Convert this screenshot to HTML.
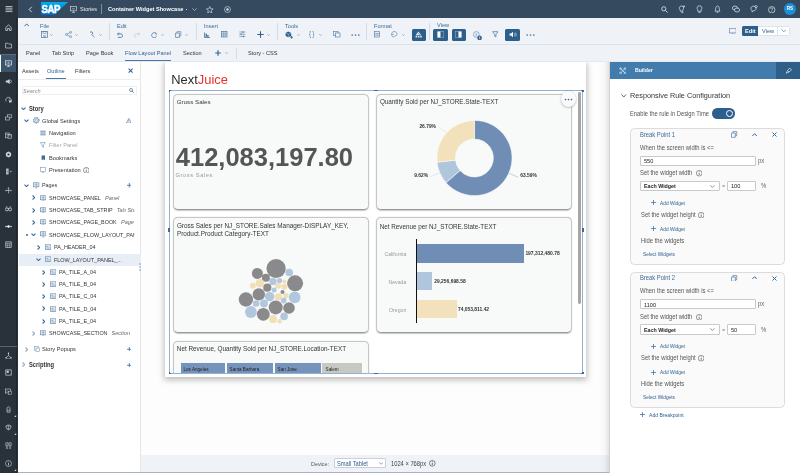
<!DOCTYPE html><html><head><meta charset="utf-8"><style>
html,body{margin:0;padding:0;width:800px;height:473px;overflow:hidden;background:#fff;font-family:"Liberation Sans",sans-serif;}
.r{position:absolute;box-sizing:border-box;}
.t{position:absolute;white-space:nowrap;-webkit-text-stroke-width:0.0px;}
#w{position:absolute;left:0;top:0;width:800px;height:473px;overflow:hidden;will-change:transform;}
</style></head><body><div id="w">
<div class="r" style="left:0px;top:0px;width:800px;height:18px;background:#354a5f;"></div>
<div class="r" style="left:0px;top:0px;width:17.5px;height:473px;background:#29313a;"></div>
<div class="r" style="left:17.5px;top:18px;width:782.5px;height:26.5px;background:#eff3f7;"></div>
<div class="r" style="left:17.5px;top:44px;width:782.5px;height:0.8px;background:#dde3ea;"></div>
<div class="r" style="left:17.5px;top:44.8px;width:782.5px;height:17px;background:#eff3f7;"></div>
<div class="r" style="left:17.5px;top:61px;width:782.5px;height:1px;background:#e2e9f0;"></div>
<div class="r" style="left:17.5px;top:62px;width:123.5px;height:411px;background:#ffffff;"></div>
<div class="r" style="left:140px;top:62px;width:0.8px;height:411px;background:#e6e6e6;"></div>
<div class="r" style="left:140.8px;top:62px;width:468px;height:393px;background:#fdfdfd;"></div>
<div class="r" style="left:140.8px;top:455px;width:468px;height:17px;background:#eff3f7;"></div>
<div class="r" style="left:17.5px;top:471.6px;width:782.5px;height:1.4px;background:#a9b4c0;"></div>
<div class="r" style="left:609px;top:62px;width:191px;height:411px;background:#ffffff;"></div>
<div class="r" style="left:598px;top:62px;width:11px;height:410px;background:linear-gradient(to right, rgba(0,0,0,0) 0%, rgba(0,0,0,0.025) 60%, rgba(0,0,0,0.1) 100%);"></div>
<div class="r" style="left:608.6px;top:62px;width:1px;height:411px;background:#d3d3d3;"></div>
<svg class="r" style="left:5px;top:5px;" width="8" height="8" viewBox="0 0 8 8"><path d="M0.5 1.5h7M0.5 3.2h7M0.5 4.9h7M0.5 6.6h7" stroke="#aab4be" stroke-width="1"/></svg>
<svg class="r" style="left:27.5px;top:6px;" width="5" height="7" viewBox="0 0 5 7"><path d="M3.8 0.8L1.2 3.5L3.8 6.2" fill="none" stroke="#dfe6ee" stroke-width="0.9"/></svg>
<svg class="r" style="left:40.5px;top:2.2px;" width="27" height="13" viewBox="0 0 27 13"><defs><linearGradient id="sg" x1="0" y1="0" x2="0" y2="1"><stop offset="0" stop-color="#00aeef"/><stop offset="1" stop-color="#0066c4"/></linearGradient></defs><path d="M0 0H27L13.5 13H0Z" fill="url(#sg)"/><text x="0.6" y="10.7" style="font-family:Liberation Sans;font-weight:bold;font-size:10.2px;letter-spacing:-0.55px" fill="#fff" stroke="#fff" stroke-width="0.45" transform="scale(0.95,1)">SAP</text></svg>
<svg class="r" style="left:70px;top:5.5px;" width="7" height="7" viewBox="0 0 7 7"><rect x="0.5" y="0.5" width="6" height="4.3" fill="none" stroke="#c9d3dd" stroke-width="0.7"/><path d="M3.5 4.8V6.6M2 6.6h3" stroke="#c9d3dd" stroke-width="0.7"/><path d="M2 2.8h3" stroke="#c9d3dd" stroke-width="0.6"/></svg>
<div class="t" style="left:80px;top:4.00px;font-size:6.050px;line-height:10px;color:#e6ecf2;transform:scaleX(0.9091);transform-origin:0 50%;">Stories</div>
<div class="r" style="left:101px;top:4px;width:0.7px;height:10px;background:#7d8d9c;"></div>
<div class="t" style="left:108.4px;top:4.00px;font-size:6.182px;line-height:10px;color:#ffffff;transform:scaleX(0.9091);transform-origin:0 50%;font-weight:bold;">Container Widget Showcase</div>
<div class="r" style="left:185.8px;top:8.6px;width:1.6px;height:1.6px;border-radius:50%;background:#fff;"></div>
<svg class="r" style="left:191.6px;top:7.6px;" width="5" height="3" viewBox="0 0 5 3"><path d="M0.4 0.4L2.5 2.5L4.6 0.4" fill="none" stroke="#c2ccd6" stroke-width="0.7"/></svg>
<svg class="r" style="left:206px;top:5.5px;" width="7.5" height="7.5" viewBox="0 0 7.5 7.5"><path d="M3.75 0.4L4.7 2.8L7.2 2.9L5.2 4.5L5.9 7L3.75 5.6L1.6 7L2.3 4.5L0.3 2.9L2.8 2.8Z" fill="none" stroke="#dfe6ee" stroke-width="0.6"/></svg>
<svg class="r" style="left:224.2px;top:5.6px;" width="7" height="7" viewBox="0 0 7 7"><circle cx="3.5" cy="3.5" r="3" fill="none" stroke="#dfe6ee" stroke-width="0.6"/><circle cx="3.5" cy="3.5" r="1.2" fill="#dfe6ee"/></svg>
<svg class="r" style="left:660.5px;top:6px;" width="7" height="7" viewBox="0 0 7 7"><circle cx="2.8" cy="2.8" r="2.1" fill="none" stroke="#e6ecf2" stroke-width="0.8"/><path d="M4.4 4.4L6.5 6.5" stroke="#e6ecf2" stroke-width="0.9"/></svg>
<svg class="r" style="left:677.5px;top:5px;" width="8" height="8.5" viewBox="0 0 8 8.5"><path d="M3.4 7.6h2M2 4.8C0.6 3.2 1.4 1 3.5 1C5.6 1 6.2 3.2 4.8 4.8V6.3H2.5Z" fill="none" stroke="#e6ecf2" stroke-width="0.7"/><path d="M6 0.3V2.5M4.9 1.4h2.2" stroke="#e6ecf2" stroke-width="0.6"/></svg>
<svg class="r" style="left:696px;top:5px;" width="7" height="8.5" viewBox="0 0 7 8.5"><path d="M2.5 7.6h2M1.8 4.8C0.4 3.2 1.2 0.8 3.5 0.8C5.8 0.8 6.6 3.2 5.2 4.8V6.3H1.8Z" fill="none" stroke="#e6ecf2" stroke-width="0.7"/></svg>
<svg class="r" style="left:714.2px;top:5px;" width="7" height="8.5" viewBox="0 0 7 8.5"><path d="M1 6.2C1.8 5.4 1.5 4 1.8 2.8C2.1 1.5 2.8 1 3.5 1C4.2 1 4.9 1.5 5.2 2.8C5.5 4 5.2 5.4 6 6.2Z" fill="none" stroke="#e6ecf2" stroke-width="0.7"/><path d="M2.7 7.4h1.6" stroke="#e6ecf2" stroke-width="0.7"/></svg>
<svg class="r" style="left:731.6px;top:5px;" width="8" height="8" viewBox="0 0 8 8"><ellipse cx="3" cy="3" rx="2.6" ry="2" fill="none" stroke="#e6ecf2" stroke-width="0.7"/><ellipse cx="5" cy="5" rx="2.6" ry="2" fill="#354a5f" stroke="#e6ecf2" stroke-width="0.7"/></svg>
<svg class="r" style="left:749.6px;top:5px;" width="8" height="8" viewBox="0 0 8 8"><path d="M1 3.5C1 2 2 1.2 3.5 1.2C5 1.2 6 2 6 3.5C6 5 5 5.8 3.5 5.8L2 7V5.4C1.3 5 1 4.3 1 3.5Z" fill="none" stroke="#e6ecf2" stroke-width="0.7"/><circle cx="6.2" cy="1.6" r="1.1" fill="none" stroke="#e6ecf2" stroke-width="0.6"/></svg>
<svg class="r" style="left:768px;top:5.5px;" width="7.5" height="7.5" viewBox="0 0 7.5 7.5"><circle cx="3.75" cy="3.75" r="3.2" fill="none" stroke="#e6ecf2" stroke-width="0.7"/><path d="M2.7 2.9C2.7 2.2 3.2 1.9 3.75 1.9C4.4 1.9 4.8 2.3 4.8 2.8C4.8 3.6 3.75 3.6 3.75 4.6" fill="none" stroke="#e6ecf2" stroke-width="0.6"/><circle cx="3.75" cy="5.6" r="0.4" fill="#e6ecf2"/></svg>
<div class="r" style="left:783.6px;top:2.6px;width:12.8px;height:12.8px;border-radius:50%;background:#1d8fd6;color:#fff;font-size:4.6px;font-weight:bold;line-height:12.8px;text-align:center;">RS</div>
<div class="r" style="left:16.2px;top:18px;width:1px;height:455px;background:#20272f;"></div>
<div class="r" style="left:0px;top:54.6px;width:16.2px;height:17.9px;background:#3b536b;"></div>
<div class="r" style="left:0px;top:54.4px;width:16.2px;height:0.5px;background:#5b6b7b;"></div>
<div class="r" style="left:0px;top:54.9px;width:1.3px;height:17.6px;background:#f4f8fb;"></div>
<svg class="r" style="left:5.1px;top:23.5px;" width="7" height="7" viewBox="0 0 7 7"><path d="M0.8 3.4L3.5 0.9L6.2 3.4V6.4H4.4V4.4H2.6V6.4H0.8Z" fill="none" stroke="#ccd4dc" stroke-width="0.8"/></svg>
<svg class="r" style="left:5.1px;top:41.5px;" width="7" height="7" viewBox="0 0 7 7"><path d="M0.6 1.2H2.8L3.5 2H6.4V6H0.6Z" fill="none" stroke="#ccd4dc" stroke-width="0.7"/></svg>
<svg class="r" style="left:5.1px;top:60.2px;" width="7" height="7" viewBox="0 0 7 7"><rect x="0.6" y="0.8" width="5.8" height="4.2" fill="none" stroke="#e6ecf2" stroke-width="0.7"/><path d="M3.5 5V6.5M2 6.5h3M2.2 2.2V3.8M3.5 1.8V3.8M4.8 2.6V3.8" stroke="#e6ecf2" stroke-width="0.6"/></svg>
<svg class="r" style="left:5.1px;top:78.0px;" width="7" height="7" viewBox="0 0 7 7"><path d="M0.8 2.6H2.4L4.6 0.9V6.1L2.4 4.4H0.8Z" fill="#ccd4dc"/><circle cx="5.6" cy="3.5" r="1.1" fill="none" stroke="#ccd4dc" stroke-width="0.6"/></svg>
<svg class="r" style="left:5.1px;top:95.8px;" width="7" height="7" viewBox="0 0 7 7"><path d="M1 5.4A2.8 2.8 0 1 1 6 5.4" fill="none" stroke="#ccd4dc" stroke-width="0.7"/><path d="M3.5 3.8L5 2.4" stroke="#ccd4dc" stroke-width="0.6"/><rect x="4" y="4.4" width="2.6" height="2" fill="#ccd4dc"/></svg>
<svg class="r" style="left:5.1px;top:113.8px;" width="7" height="7" viewBox="0 0 7 7"><rect x="2.4" y="0.8" width="4" height="3" fill="none" stroke="#ccd4dc" stroke-width="0.6"/><rect x="0.6" y="3" width="4" height="3" fill="#29313a" stroke="#ccd4dc" stroke-width="0.6"/></svg>
<svg class="r" style="left:5.1px;top:132.3px;" width="7" height="7" viewBox="0 0 7 7"><rect x="0.6" y="1" width="3.6" height="4.8" fill="none" stroke="#ccd4dc" stroke-width="0.6"/><rect x="3" y="2.4" width="3.4" height="3.8" fill="#29313a" stroke="#ccd4dc" stroke-width="0.6"/><path d="M0.6 2.6h3.6M3 3.8h3.4" stroke="#ccd4dc" stroke-width="0.5"/></svg>
<svg class="r" style="left:5.1px;top:150.5px;" width="7" height="7" viewBox="0 0 7 7"><path d="M3.5 0.6L6.1 2V5L3.5 6.4L0.9 5V2Z" fill="#ccd4dc"/><circle cx="3.5" cy="3.5" r="1.1" fill="#29313a"/></svg>
<svg class="r" style="left:5.1px;top:168.4px;" width="7" height="7" viewBox="0 0 7 7"><rect x="1" y="0.6" width="2.6" height="5.8" fill="#ccd4dc"/><path d="M1 2h2.6M1 3.5h2.6M1 5h2.6" stroke="#29313a" stroke-width="0.4"/><path d="M4.6 3.5H6.4M5.6 2.8L6.4 3.5L5.6 4.2" fill="none" stroke="#ccd4dc" stroke-width="0.5"/></svg>
<svg class="r" style="left:5.1px;top:186.7px;" width="7" height="7" viewBox="0 0 7 7"><path d="M3.5 0.6V6.4M0.6 3.5H6.4M2.7 1.4L3.5 0.6L4.3 1.4M1.4 2.7L0.6 3.5L1.4 4.3M5.6 2.7L6.4 3.5L5.6 4.3" fill="none" stroke="#ccd4dc" stroke-width="0.6"/></svg>
<svg class="r" style="left:5.1px;top:205.3px;" width="7" height="7" viewBox="0 0 7 7"><circle cx="1.9" cy="4.4" r="1.5" fill="none" stroke="#ccd4dc" stroke-width="0.8"/><circle cx="5.1" cy="4.4" r="1.5" fill="none" stroke="#ccd4dc" stroke-width="0.8"/><path d="M1.2 2.6L2 1.2M5.8 2.6L5 1.2M3 3.4h1" stroke="#ccd4dc" stroke-width="0.7"/></svg>
<svg class="r" style="left:5.1px;top:222.6px;" width="7" height="7" viewBox="0 0 7 7"><path d="M0.2 3.5H6.8" stroke="#ccd4dc" stroke-width="0.5"/><circle cx="1" cy="3.5" r="0.8" fill="#ccd4dc"/><circle cx="3.5" cy="3.5" r="1.2" fill="#fff"/><circle cx="6" cy="3.5" r="0.8" fill="#ccd4dc"/></svg>
<svg class="r" style="left:5.1px;top:240.9px;" width="7" height="7" viewBox="0 0 7 7"><rect x="0.8" y="0.9" width="5.4" height="5.4" fill="none" stroke="#ccd4dc" stroke-width="0.7"/><path d="M0.8 2.4h5.4M2.6 2.4v3.9M4.4 2.4v3.9M0.8 4.2h5.4" stroke="#ccd4dc" stroke-width="0.45"/></svg>
<div class="r" style="left:0px;top:345.6px;width:17px;height:0.7px;background:#59636e;"></div>
<svg class="r" style="left:5.1px;top:352.1px;" width="7" height="7" viewBox="0 0 7 7"><path d="M3.5 0.8V3.6M3.5 3.6L1 5.6M3.5 3.6L6 5.6" fill="none" stroke="#ccd4dc" stroke-width="0.6"/><circle cx="3.5" cy="1.2" r="0.7" fill="#ccd4dc"/><circle cx="1" cy="5.8" r="0.7" fill="#ccd4dc"/><circle cx="6" cy="5.8" r="0.7" fill="#ccd4dc"/><path d="M0.4 6.6H6.6" stroke="#ccd4dc" stroke-width="0.4"/></svg>
<svg class="r" style="left:5.1px;top:369.4px;" width="7" height="7" viewBox="0 0 7 7"><rect x="0.8" y="0.9" width="5.4" height="5.2" fill="none" stroke="#ccd4dc" stroke-width="0.7"/><rect x="1.6" y="1.8" width="2.2" height="2" fill="#ccd4dc"/></svg>
<svg class="r" style="left:5.1px;top:387.7px;" width="7" height="7" viewBox="0 0 7 7"><rect x="0.6" y="1" width="5" height="4" fill="none" stroke="#ccd4dc" stroke-width="0.6"/><path d="M1.2 4.2L2.6 2.8L3.6 3.8" fill="none" stroke="#ccd4dc" stroke-width="0.5"/><rect x="3.6" y="3.2" width="3" height="3" fill="#29313a" stroke="#ccd4dc" stroke-width="0.5"/></svg>
<svg class="r" style="left:5.1px;top:405.6px;" width="7" height="7" viewBox="0 0 7 7"><path d="M2 6.2V2.6C2 1.6 2.7 0.8 3.5 0.8C4.3 0.8 5 1.6 5 2.6V6.2Z" fill="none" stroke="#ccd4dc" stroke-width="0.7"/><path d="M2 4.2h3" stroke="#ccd4dc" stroke-width="0.5"/></svg>
<svg class="r" style="left:5.1px;top:424.2px;" width="7" height="7" viewBox="0 0 7 7"><path d="M0.8 2.2C1.8 0.6 5.2 0.6 6.2 2.2L5.4 4.6C4.6 6.2 2.4 6.2 1.6 4.6Z" fill="none" stroke="#ccd4dc" stroke-width="0.6"/><path d="M0.8 2.2h5.4M1.6 4.6h3.8M3.5 1v5" stroke="#ccd4dc" stroke-width="0.45"/></svg>
<svg class="r" style="left:5.1px;top:442.0px;" width="7" height="7" viewBox="0 0 7 7"><path d="M0.8 0.8H3V3.8H0.8ZM4 0.8H6.2V3.8H4ZM1.9 3.8V6.2M5.1 3.8V6.2M0.8 6.2h2.2M4 6.2h2.2" fill="none" stroke="#ccd4dc" stroke-width="0.6"/></svg>
<svg class="r" style="left:5.1px;top:459.8px;" width="7" height="7" viewBox="0 0 7 7"><circle cx="3.5" cy="3.5" r="3" fill="none" stroke="#ccd4dc" stroke-width="0.6"/><path d="M3.5 3V5.4" stroke="#ccd4dc" stroke-width="0.8"/><circle cx="3.5" cy="1.9" r="0.45" fill="#ccd4dc"/></svg>
<svg class="r" style="left:14.4px;top:414.8px;" width="2.2" height="2.2" viewBox="0 0 2.2 2.2"><path d="M2.2 0V2.2H0Z" fill="#c3ccd5"/></svg>
<svg class="r" style="left:14.4px;top:433.3px;" width="2.2" height="2.2" viewBox="0 0 2.2 2.2"><path d="M2.2 0V2.2H0Z" fill="#c3ccd5"/></svg>
<svg class="r" style="left:14.4px;top:468.8px;" width="2.2" height="2.2" viewBox="0 0 2.2 2.2"><path d="M2.2 0V2.2H0Z" fill="#c3ccd5"/></svg>
<svg class="r" style="left:23.6px;top:22.8px;" width="5.4" height="3.8" viewBox="0 0 5.4 3.8"><path d="M0.5 3.2L2.7 0.9L4.9 3.2" fill="none" stroke="#3f6d99" stroke-width="1"/></svg>
<div class="t" style="left:40.2px;top:20.60px;font-size:6.160px;line-height:10px;color:#3b6a97;transform:scaleX(0.9091);transform-origin:0 50%;">File</div>
<div class="t" style="left:116.7px;top:20.60px;font-size:6.160px;line-height:10px;color:#3b6a97;transform:scaleX(0.9091);transform-origin:0 50%;">Edit</div>
<div class="t" style="left:203.7px;top:20.60px;font-size:6.160px;line-height:10px;color:#3b6a97;transform:scaleX(0.9091);transform-origin:0 50%;">Insert</div>
<div class="t" style="left:285.2px;top:20.60px;font-size:6.160px;line-height:10px;color:#3b6a97;transform:scaleX(0.9091);transform-origin:0 50%;">Tools</div>
<div class="t" style="left:373.8px;top:20.60px;font-size:6.160px;line-height:10px;color:#3b6a97;transform:scaleX(0.9091);transform-origin:0 50%;">Format</div>
<div class="t" style="left:437px;top:20.40px;font-size:6.160px;line-height:10px;color:#3b6a97;transform:scaleX(0.9091);transform-origin:0 50%;">View</div>
<div class="r" style="left:109.1px;top:22.6px;width:0.7px;height:17px;background:#d4dce5;"></div>
<div class="r" style="left:196.1px;top:22.6px;width:0.7px;height:17px;background:#d4dce5;"></div>
<div class="r" style="left:277.1px;top:22.6px;width:0.7px;height:17px;background:#d4dce5;"></div>
<div class="r" style="left:366.1px;top:22.6px;width:0.7px;height:17px;background:#d4dce5;"></div>
<div class="r" style="left:429.1px;top:22.6px;width:0.7px;height:17px;background:#d4dce5;"></div>
<svg class="r" style="left:40.6px;top:31.2px;" width="7" height="7" viewBox="0 0 7 7"><rect x="0.6" y="0.6" width="5.8" height="5.8" fill="none" stroke="#4a77a3" stroke-width="0.7"/><rect x="2" y="0.6" width="3" height="2" fill="none" stroke="#4a77a3" stroke-width="0.5"/><path d="M2 4.2L5 6.2M5 4.2L2 6.2" stroke="#4a77a3" stroke-width="0.5"/></svg>
<svg class="r" style="left:50.0px;top:33.6px;" width="3.2" height="2" viewBox="0 0 3.2 2"><path d="M0.2 0.2L1.6 1.6L3 0.2" fill="none" stroke="#6a8bad" stroke-width="0.55"/></svg>
<svg class="r" style="left:64.8px;top:31.2px;" width="7" height="7" viewBox="0 0 7 7"><circle cx="1.4" cy="3.5" r="1" fill="none" stroke="#4a77a3" stroke-width="0.6"/><circle cx="5.6" cy="1.3" r="1" fill="none" stroke="#4a77a3" stroke-width="0.6"/><circle cx="5.6" cy="5.7" r="1" fill="none" stroke="#4a77a3" stroke-width="0.6"/><path d="M2.3 3L4.7 1.7M2.3 4L4.7 5.3" stroke="#4a77a3" stroke-width="0.6"/></svg>
<svg class="r" style="left:75.10000000000001px;top:33.6px;" width="3.2" height="2" viewBox="0 0 3.2 2"><path d="M0.2 0.2L1.6 1.6L3 0.2" fill="none" stroke="#6a8bad" stroke-width="0.55"/></svg>
<svg class="r" style="left:88.6px;top:31.4px;" width="6" height="6.5" viewBox="0 0 6 6.5"><path d="M1 1.2L3 0.8L4 2.2L2.6 3.4L5.4 6" fill="none" stroke="#4a77a3" stroke-width="0.8"/></svg>
<svg class="r" style="left:98.80000000000001px;top:33.6px;" width="3.2" height="2" viewBox="0 0 3.2 2"><path d="M0.2 0.2L1.6 1.6L3 0.2" fill="none" stroke="#6a8bad" stroke-width="0.55"/></svg>
<svg class="r" style="left:116.8px;top:31.6px;" width="6" height="6" viewBox="0 0 6 6"><path d="M1.8 0.6L0.5 1.9L1.8 3.2M0.5 1.9H3.8C5 1.9 5.6 2.8 5.6 3.7C5.6 4.7 5 5.4 3.8 5.4H0.8" fill="none" stroke="#2f6192" stroke-width="0.75"/></svg>
<svg class="r" style="left:134.4px;top:31.6px;" width="6" height="6" viewBox="0 0 6 6"><path d="M4.2 0.6L5.5 1.9L4.2 3.2M5.5 1.9H2.2C1 1.9 0.4 2.8 0.4 3.7C0.4 4.7 1 5.4 2.2 5.4" fill="none" stroke="#b9c8d8" stroke-width="0.75"/></svg>
<svg class="r" style="left:151.4px;top:31.6px;" width="6.5" height="6.5" viewBox="0 0 6.5 6.5"><path d="M5.3 1.6A2.6 2.6 0 1 0 5.6 4.4" fill="none" stroke="#4a77a3" stroke-width="0.75"/><path d="M3.8 0.6L5.6 1.8L4.6 3.4" fill="none" stroke="#4a77a3" stroke-width="0.6"/></svg>
<svg class="r" style="left:160.9px;top:33.6px;" width="3.2" height="2" viewBox="0 0 3.2 2"><path d="M0.2 0.2L1.6 1.6L3 0.2" fill="none" stroke="#6a8bad" stroke-width="0.55"/></svg>
<svg class="r" style="left:175.2px;top:31.2px;" width="6.5" height="7" viewBox="0 0 6.5 7"><path d="M2 2V0.6H5.8V5H4.4" fill="none" stroke="#4a77a3" stroke-width="0.6"/><path d="M0.6 2H4.4V6.4H0.6Z" fill="none" stroke="#4a77a3" stroke-width="0.7"/></svg>
<svg class="r" style="left:185.20000000000002px;top:33.6px;" width="3.2" height="2" viewBox="0 0 3.2 2"><path d="M0.2 0.2L1.6 1.6L3 0.2" fill="none" stroke="#6a8bad" stroke-width="0.55"/></svg>
<svg class="r" style="left:203.8px;top:31.6px;" width="6.5" height="6" viewBox="0 0 6.5 6"><path d="M0.5 0.5V5.5H6.2" fill="none" stroke="#2f6192" stroke-width="0.7"/><rect x="1.6" y="1.6" width="1.2" height="3.3" fill="#2f6192"/><rect x="3.3" y="3" width="1.2" height="1.9" fill="#2f6192"/></svg>
<svg class="r" style="left:221.2px;top:31.4px;" width="6.5" height="6.5" viewBox="0 0 6.5 6.5"><rect x="0.5" y="0.5" width="5.5" height="5.5" fill="none" stroke="#4a77a3" stroke-width="0.7"/><path d="M0.5 2.3h5.5M0.5 4.1h5.5M2.3 0.5v5.5M4.1 0.5v5.5" stroke="#4a77a3" stroke-width="0.5"/></svg>
<svg class="r" style="left:239.2px;top:31.4px;" width="6.5" height="6.5" viewBox="0 0 6.5 6.5"><path d="M0.3 1h6M0.3 3.2h6M0.3 5.4h6" stroke="#4a77a3" stroke-width="0.6"/><rect x="3.4" y="0.3" width="1" height="1.5" fill="#4a77a3"/><rect x="1.6" y="2.5" width="1" height="1.5" fill="#4a77a3"/><rect x="3.9" y="4.7" width="1" height="1.5" fill="#4a77a3"/></svg>
<svg class="r" style="left:256.6px;top:31.2px;" width="7" height="7" viewBox="0 0 7 7"><path d="M3.5 0.3V6.7M0.3 3.5H6.7" stroke="#2f6192" stroke-width="1.1"/></svg>
<svg class="r" style="left:266.59999999999997px;top:33.6px;" width="3.2" height="2" viewBox="0 0 3.2 2"><path d="M0.2 0.2L1.6 1.6L3 0.2" fill="none" stroke="#6a8bad" stroke-width="0.55"/></svg>
<svg class="r" style="left:284.6px;top:31px;" width="8.5" height="8" viewBox="0 0 8.5 8"><path d="M0.6 1.9L3.4 0.5L6.2 1.9V4.9L3.4 6.3L0.6 4.9Z" fill="#2f6192"/><path d="M0.6 1.9L3.4 3.3L6.2 1.9M3.4 3.3V6.3" fill="none" stroke="#c9d7e6" stroke-width="0.45"/><path d="M6.6 4.8V7.8M5.1 6.3h3" stroke="#2f6192" stroke-width="0.8"/></svg>
<svg class="r" style="left:296.59999999999997px;top:33.6px;" width="3.2" height="2" viewBox="0 0 3.2 2"><path d="M0.2 0.2L1.6 1.6L3 0.2" fill="none" stroke="#6a8bad" stroke-width="0.55"/></svg>
<div class="t" style="left:308.8px;top:29.40px;font-size:6.820px;line-height:10px;color:#5a83ab;transform:scaleX(0.9091);transform-origin:0 50%;">{&#8201;}</div>
<svg class="r" style="left:319.4px;top:33.6px;" width="3.2" height="2" viewBox="0 0 3.2 2"><path d="M0.2 0.2L1.6 1.6L3 0.2" fill="none" stroke="#6a8bad" stroke-width="0.55"/></svg>
<svg class="r" style="left:333.3px;top:31.4px;" width="7.5" height="6.5" viewBox="0 0 7.5 6.5"><rect x="0.5" y="0.5" width="4.5" height="4" fill="none" stroke="#4a77a3" stroke-width="0.6"/><rect x="2.5" y="2" width="4.5" height="4" fill="#eff3f7" stroke="#4a77a3" stroke-width="0.6"/></svg>
<svg class="r" style="left:351px;top:34px;" width="9" height="2" viewBox="0 0 9 2"><circle cx="1.2" cy="1" r="0.85" fill="#4a77a3"/><circle cx="4.5" cy="1" r="0.85" fill="#4a77a3"/><circle cx="7.8" cy="1" r="0.85" fill="#4a77a3"/></svg>
<svg class="r" style="left:373.8px;top:31.3px;" width="6" height="6.5" viewBox="0 0 6 6.5"><rect x="0.5" y="0.5" width="5" height="5.5" fill="none" stroke="#4a77a3" stroke-width="0.6"/><path d="M0.5 2.4h5M0.5 4.2h5M3 2.4v1.8" stroke="#4a77a3" stroke-width="0.5"/></svg>
<svg class="r" style="left:391px;top:31.3px;" width="7" height="6.5" viewBox="0 0 7 6.5"><path d="M6 3.2C6 1.6 4.8 0.5 3.3 0.5C1.7 0.5 0.5 1.8 0.5 3.3C0.5 4.9 1.7 6 3 6C3.8 6 3.6 5 4.3 4.8C5.2 4.6 6 4.6 6 3.2Z" fill="none" stroke="#4a77a3" stroke-width="0.6"/><circle cx="2" cy="3.3" r="0.6" fill="#4a77a3"/></svg>
<svg class="r" style="left:401.59999999999997px;top:33.6px;" width="3.2" height="2" viewBox="0 0 3.2 2"><path d="M0.2 0.2L1.6 1.6L3 0.2" fill="none" stroke="#6a8bad" stroke-width="0.55"/></svg>
<div class="r" style="left:411.7px;top:29.1px;width:14.7px;height:11.6px;background:#2d5f8c;border-radius:1.5px;"></div>
<svg class="r" style="left:415.3px;top:31.4px;" width="7.4" height="7.2" viewBox="0 0 7.4 7.2"><path d="M3.4 0.6L6.4 4.2H0.6Z" fill="#e4ecf4"/><path d="M2.6 1.8L5 4.2" stroke="#2d5f8c" stroke-width="0.55"/><rect x="0.6" y="4.9" width="1.6" height="1.6" fill="#e4ecf4"/><rect x="2.9" y="4.9" width="1.6" height="1.6" fill="#e4ecf4"/><rect x="5.2" y="4.9" width="1.6" height="1.6" fill="#e4ecf4"/></svg>
<div class="r" style="left:433.2px;top:29.2px;width:14.6px;height:11.5px;background:#2d5f8c;border-radius:1.5px;"></div>
<div class="r" style="left:451.5px;top:29.2px;width:14.5px;height:11.5px;background:#2d5f8c;border-radius:1.5px;"></div>
<svg class="r" style="left:437px;top:31.4px;" width="7.4" height="7" viewBox="0 0 7.4 7"><rect x="0.4" y="0.4" width="3" height="6.2" fill="#fff"/><rect x="3.4" y="0.4" width="3.4" height="6.2" fill="none" stroke="#9fb6cc" stroke-width="0.5"/></svg>
<svg class="r" style="left:455.2px;top:31.4px;" width="7.4" height="7" viewBox="0 0 7.4 7"><rect x="0.4" y="0.4" width="3.4" height="6.2" fill="none" stroke="#9fb6cc" stroke-width="0.5"/><rect x="3.6" y="0.4" width="3" height="6.2" fill="#fff"/></svg>
<svg class="r" style="left:472.6px;top:30.8px;" width="9.4" height="9.6" viewBox="0 0 9.4 9.6"><circle cx="3.3" cy="3.5" r="2.9" fill="none" stroke="#5f86ad" stroke-width="0.65"/><path d="M3.3 2.4V4.9" stroke="#5f86ad" stroke-width="0.8"/><circle cx="6.6" cy="6.9" r="2.3" fill="#2f6192"/><path d="M6 5.9H7.1L6.4 6.7C7.4 6.7 7.3 8 6 7.9" fill="none" stroke="#fff" stroke-width="0.5"/></svg>
<svg class="r" style="left:491.6px;top:31.3px;" width="6.6" height="6.6" viewBox="0 0 6.6 6.6"><path d="M0.5 0.7H6.1L3.9 3.4V6L2.7 5.2V3.4Z" fill="none" stroke="#4a77a3" stroke-width="0.75"/></svg>
<div class="r" style="left:505px;top:29.2px;width:14.7px;height:11.5px;background:#2d5f8c;border-radius:1.5px;"></div>
<svg class="r" style="left:508.7px;top:31.2px;" width="8" height="7" viewBox="0 0 8 7"><path d="M0.6 2.4H2L4 0.8V6.2L2 4.6H0.6Z" fill="#fff"/><path d="M5.2 2.2C6 2.8 6 4.2 5.2 4.8M6.2 1.4C7.4 2.4 7.4 4.6 6.2 5.6" fill="none" stroke="#fff" stroke-width="0.55"/></svg>
<svg class="r" style="left:526px;top:34px;" width="9" height="2" viewBox="0 0 9 2"><circle cx="1.2" cy="1" r="0.85" fill="#4a77a3"/><circle cx="4.5" cy="1" r="0.85" fill="#4a77a3"/><circle cx="7.8" cy="1" r="0.85" fill="#4a77a3"/></svg>
<svg class="r" style="left:728.8px;top:27.6px;" width="7.6" height="6.4" viewBox="0 0 7.6 6.4"><rect x="0.5" y="0.5" width="6.6" height="4.4" fill="none" stroke="#6b90b5" stroke-width="0.7"/><path d="M2 5.9h3.6" stroke="#6b90b5" stroke-width="0.7"/></svg>
<div class="r" style="left:742px;top:25.5px;width:47.5px;height:10.4px;background:#fff;border:0.6px solid #dfe4ea;border-radius:1.5px;"></div>
<div class="r" style="left:742px;top:25.5px;width:16.3px;height:10.4px;background:#2d5f8c;border-radius:1.5px 0 0 1.5px;"></div>
<div class="r" style="left:777.4px;top:25.8px;width:0.6px;height:9.8px;background:#dfe4ea;"></div>
<div class="t" style="left:744.8px;top:25.60px;font-size:6.160px;line-height:10px;color:#ffffff;transform:scaleX(0.9091);transform-origin:0 50%;font-weight:bold;">Edit</div>
<div class="t" style="left:761.5px;top:25.70px;font-size:6.160px;line-height:10px;color:#2f6192;transform:scaleX(0.9091);transform-origin:0 50%;">View</div>
<svg class="r" style="left:780.8px;top:29.3px;" width="5.6" height="3.4" viewBox="0 0 5.6 3.4"><path d="M0.4 0.4L2.8 2.9L5.2 0.4" fill="none" stroke="#5a83ab" stroke-width="0.75"/></svg>
<div class="t" style="left:26px;top:48.00px;font-size:6.160px;line-height:10px;color:#32363a;transform:scaleX(0.9091);transform-origin:0 50%;">Panel</div>
<div class="t" style="left:52.2px;top:48.00px;font-size:6.160px;line-height:10px;color:#32363a;transform:scaleX(0.9091);transform-origin:0 50%;">Tab Strip</div>
<div class="t" style="left:85.7px;top:48.00px;font-size:6.160px;line-height:10px;color:#32363a;transform:scaleX(0.9091);transform-origin:0 50%;">Page Book</div>
<div class="t" style="left:124.7px;top:48.00px;font-size:6.160px;line-height:10px;color:#2f6192;transform:scaleX(0.9091);transform-origin:0 50%;">Flow Layout Panel</div>
<div class="r" style="left:124.5px;top:60px;width:46.8px;height:1.2px;background:#4a78a6;"></div>
<div class="t" style="left:182.7px;top:48.00px;font-size:6.160px;line-height:10px;color:#32363a;transform:scaleX(0.9091);transform-origin:0 50%;">Section</div>
<svg class="r" style="left:214.7px;top:50px;" width="6" height="6" viewBox="0 0 6 6"><path d="M3 0.2V5.8M0.2 3H5.8" stroke="#2f6192" stroke-width="1.1"/></svg>
<svg class="r" style="left:224.6px;top:52.3px;" width="3.2" height="2" viewBox="0 0 3.2 2"><path d="M0.2 0.2L1.6 1.6L3 0.2" fill="none" stroke="#6a8bad" stroke-width="0.55"/></svg>
<div class="r" style="left:236px;top:47.5px;width:0.7px;height:11.5px;background:#d4dce5;"></div>
<div class="t" style="left:248.4px;top:48.00px;font-size:6.160px;line-height:10px;color:#32363a;transform:scaleX(0.9091);transform-origin:0 50%;">Story - CSS</div>
<div class="t" style="left:21.9px;top:66.00px;font-size:6.160px;line-height:10px;color:#32363a;transform:scaleX(0.9091);transform-origin:0 50%;">Assets</div>
<div class="t" style="left:46.6px;top:66.00px;font-size:6.160px;line-height:10px;color:#2f6192;transform:scaleX(0.9091);transform-origin:0 50%;">Outline</div>
<div class="t" style="left:74.7px;top:66.00px;font-size:6.160px;line-height:10px;color:#32363a;transform:scaleX(0.9091);transform-origin:0 50%;">Filters</div>
<div class="r" style="left:17.5px;top:79.3px;width:123px;height:0.6px;background:#eeeeee;"></div>
<div class="r" style="left:46.4px;top:77.8px;width:19.9px;height:1.1px;background:#4a78a6;"></div>
<svg class="r" style="left:128.2px;top:67.6px;" width="5.2" height="5.2" viewBox="0 0 5.2 5.2"><path d="M0.6 0.6L4.6 4.6M4.6 0.6L0.6 4.6" stroke="#2f6192" stroke-width="1.05"/></svg>
<div class="r" style="left:21.5px;top:85.7px;width:115.5px;height:9.8px;border:0.6px solid #eef0f2;background:#fff;"></div>
<div class="t" style="left:23px;top:85.60px;font-size:6.160px;line-height:10px;color:#8c8c8c;transform:scaleX(0.9091);transform-origin:0 50%;font-style:italic;">Search</div>
<svg class="r" style="left:129.2px;top:88px;" width="5" height="5" viewBox="0 0 5 5"><circle cx="2" cy="2" r="1.5" fill="none" stroke="#3f6d99" stroke-width="0.7"/><path d="M3.1 3.1L4.6 4.6" stroke="#3f6d99" stroke-width="0.9"/></svg>
<svg class="r" style="left:20.8px;top:106.7px;" width="5" height="3.4" viewBox="0 0 5 3.4"><path d="M0.5 0.55L2.5 2.7L4.5 0.55" fill="none" stroke="#3f6d99" stroke-width="1.05"/></svg>
<div class="t" style="left:29.2px;top:103.50px;font-size:6.380px;line-height:10px;color:#32363a;transform:scaleX(0.9091);transform-origin:0 50%;font-weight:bold;">Story</div>
<svg class="r" style="left:24.3px;top:118.7px;" width="5" height="3.4" viewBox="0 0 5 3.4"><path d="M0.5 0.55L2.5 2.7L4.5 0.55" fill="none" stroke="#3f6d99" stroke-width="1.05"/></svg>
<svg class="r" style="left:33.1px;top:117.1px;" width="6.6" height="6.6" viewBox="0 0 6.6 6.6"><circle cx="3.3" cy="3.3" r="2.5" fill="none" stroke="#5f86ad" stroke-width="0.7"/><circle cx="3.3" cy="3.3" r="2.9" fill="none" stroke="#5f86ad" stroke-width="0.9" stroke-dasharray="0.8 1.02"/><circle cx="3.3" cy="3.3" r="1.1" fill="none" stroke="#5f86ad" stroke-width="0.6"/></svg>
<div class="t" style="left:42.4px;top:115.60px;font-size:6.237px;line-height:10px;color:#32363a;transform:scaleX(0.9091);transform-origin:0 50%;">Global Settings</div>
<svg class="r" style="left:125.8px;top:117.6px;" width="5.6" height="5.6" viewBox="0 0 5.6 5.6"><path d="M2.8 0.5L5.2 5H0.4Z" fill="none" stroke="#3f6d99" stroke-width="0.6"/><path d="M2.8 2V3.6" stroke="#3f6d99" stroke-width="0.5"/></svg>
<svg class="r" style="left:39.8px;top:130px;" width="6" height="6" viewBox="0 0 6 6"><path d="M0.3 1.2h5.4M0.3 3h5.4M0.3 4.8h5.4" stroke="#5f86ad" stroke-width="0.95"/></svg>
<div class="t" style="left:49.1px;top:128.00px;font-size:6.237px;line-height:10px;color:#32363a;transform:scaleX(0.9091);transform-origin:0 50%;">Navigation</div>
<svg class="r" style="left:40.1px;top:142.3px;" width="5.6" height="6" viewBox="0 0 5.6 6"><path d="M0.4 0.6H5.2L3.4 3V5.4L2.2 4.6V3Z" fill="none" stroke="#7d9dbd" stroke-width="0.7"/></svg>
<div class="t" style="left:49.1px;top:140.30px;font-size:6.237px;line-height:10px;color:#a9a9a9;transform:scaleX(0.9091);transform-origin:0 50%;">Filter Panel</div>
<svg class="r" style="left:40.6px;top:154.6px;" width="4.6" height="5.8" viewBox="0 0 4.6 5.8"><path d="M0.6 0.4H4V5.4L2.3 4.2L0.6 5.4Z" fill="#3f6d99"/></svg>
<div class="t" style="left:49.1px;top:152.50px;font-size:6.237px;line-height:10px;color:#32363a;transform:scaleX(0.9091);transform-origin:0 50%;">Bookmarks</div>
<svg class="r" style="left:39.8px;top:166.8px;" width="6" height="6" viewBox="0 0 6 6"><rect x="0.4" y="0.6" width="5.2" height="3.9" fill="none" stroke="#6d8fb3" stroke-width="0.55"/><path d="M3 4.5V5.5M1.8 5.6h2.4" stroke="#6d8fb3" stroke-width="0.5"/></svg>
<div class="t" style="left:49.1px;top:164.80px;font-size:6.237px;line-height:10px;color:#32363a;transform:scaleX(0.9091);transform-origin:0 50%;">Presentation</div>
<svg class="r" style="left:82.7px;top:166.5px;" width="6.6" height="6.6" viewBox="0 0 6.6 6.6"><circle cx="3.3" cy="3.3" r="2.85" fill="none" stroke="#555" stroke-width="0.6"/><path d="M3.3 2.8V5" stroke="#555" stroke-width="0.75"/><circle cx="3.3" cy="1.75" r="0.42" fill="#555"/></svg>
<svg class="r" style="left:24.3px;top:183.70000000000002px;" width="5" height="3.4" viewBox="0 0 5 3.4"><path d="M0.5 0.55L2.5 2.7L4.5 0.55" fill="none" stroke="#3f6d99" stroke-width="1.05"/></svg>
<svg class="r" style="left:33.199999999999996px;top:182.3px;" width="6.4" height="6.4" viewBox="0 0 6.4 6.4"><rect x="0.5" y="0.8" width="5.4" height="4" fill="#eaf0f6" stroke="#6d8fb3" stroke-width="0.7"/><path d="M3.2 4.8V6.1M2.2 6.1h2M1.6 2.8h3.2M3.2 1.2V4.4" stroke="#6d8fb3" stroke-width="0.55"/><path d="M3.2 0V0.8" stroke="#6d8fb3" stroke-width="0.6"/></svg>
<div class="t" style="left:42.4px;top:180.00px;font-size:5.940px;line-height:10px;color:#32363a;transform:scaleX(0.9091);transform-origin:0 50%;">Pages</div>
<svg class="r" style="left:126.7px;top:183.0px;" width="4.6" height="4.6" viewBox="0 0 4.6 4.6"><path d="M2.3 0V4.6M0 2.3H4.6" stroke="#3f6d99" stroke-width="0.8"/></svg>
<svg class="r" style="left:31.6px;top:195.3px;" width="3.4" height="5" viewBox="0 0 3.4 5"><path d="M0.55 0.5L2.7 2.5L0.55 4.5" fill="none" stroke="#3f6d99" stroke-width="1.05"/></svg>
<svg class="r" style="left:39.699999999999996px;top:194.60000000000002px;" width="6.4" height="6.4" viewBox="0 0 6.4 6.4"><rect x="0.5" y="0.8" width="5.4" height="4" fill="#eaf0f6" stroke="#6d8fb3" stroke-width="0.7"/><path d="M3.2 4.8V6.1M2.2 6.1h2M1.6 2.8h3.2M3.2 1.2V4.4" stroke="#6d8fb3" stroke-width="0.55"/><path d="M3.2 0V0.8" stroke="#6d8fb3" stroke-width="0.6"/></svg>
<div class="t" style="left:49.1px;top:192.80px;font-size:5.940px;line-height:10px;color:#32363a;transform:scaleX(0.9091);transform-origin:0 50%;width:94px;overflow:hidden;">SHOWCASE_PANEL<i style="color:#6a6a6a;font-size:1.04em;margin-left:0.75em">Panel</i></div>
<svg class="r" style="left:31.6px;top:207.7px;" width="3.4" height="5" viewBox="0 0 3.4 5"><path d="M0.55 0.5L2.7 2.5L0.55 4.5" fill="none" stroke="#3f6d99" stroke-width="1.05"/></svg>
<svg class="r" style="left:39.699999999999996px;top:207.0px;" width="6.4" height="6.4" viewBox="0 0 6.4 6.4"><rect x="0.5" y="0.8" width="5.4" height="4" fill="#eaf0f6" stroke="#6d8fb3" stroke-width="0.7"/><path d="M3.2 4.8V6.1M2.2 6.1h2M1.6 2.8h3.2M3.2 1.2V4.4" stroke="#6d8fb3" stroke-width="0.55"/><path d="M3.2 0V0.8" stroke="#6d8fb3" stroke-width="0.6"/></svg>
<div class="t" style="left:49.1px;top:205.20px;font-size:5.940px;line-height:10px;color:#32363a;transform:scaleX(0.9091);transform-origin:0 50%;width:94px;overflow:hidden;">SHOWCASE_TAB_STRIP<i style="color:#6a6a6a;font-size:1.04em;margin-left:0.75em">Tab Strip</i></div>
<svg class="r" style="left:31.6px;top:219.8px;" width="3.4" height="5" viewBox="0 0 3.4 5"><path d="M0.55 0.5L2.7 2.5L0.55 4.5" fill="none" stroke="#3f6d99" stroke-width="1.05"/></svg>
<svg class="r" style="left:39.699999999999996px;top:219.10000000000002px;" width="6.4" height="6.4" viewBox="0 0 6.4 6.4"><rect x="0.5" y="0.8" width="5.4" height="4" fill="#eaf0f6" stroke="#6d8fb3" stroke-width="0.7"/><path d="M3.2 4.8V6.1M2.2 6.1h2M1.6 2.8h3.2M3.2 1.2V4.4" stroke="#6d8fb3" stroke-width="0.55"/><path d="M3.2 0V0.8" stroke="#6d8fb3" stroke-width="0.6"/></svg>
<div class="t" style="left:49.1px;top:217.30px;font-size:5.940px;line-height:10px;color:#32363a;transform:scaleX(0.9091);transform-origin:0 50%;width:94px;overflow:hidden;">SHOWCASE_PAGE_BOOK<i style="color:#6a6a6a;font-size:1.04em;margin-left:0.75em">Page Book</i></div>
<svg class="r" style="left:25.6px;top:233.5px;" width="2" height="2" viewBox="0 0 2 2"><circle cx="1" cy="1" r="1" fill="#3f6d99"/></svg>
<svg class="r" style="left:30.5px;top:232.70000000000002px;" width="5" height="3.4" viewBox="0 0 5 3.4"><path d="M0.5 0.55L2.5 2.7L4.5 0.55" fill="none" stroke="#3f6d99" stroke-width="1.05"/></svg>
<svg class="r" style="left:39.699999999999996px;top:231.3px;" width="6.4" height="6.4" viewBox="0 0 6.4 6.4"><rect x="0.5" y="0.8" width="5.4" height="4" fill="#eaf0f6" stroke="#6d8fb3" stroke-width="0.7"/><path d="M3.2 4.8V6.1M2.2 6.1h2M1.6 2.8h3.2M3.2 1.2V4.4" stroke="#6d8fb3" stroke-width="0.55"/><path d="M3.2 0V0.8" stroke="#6d8fb3" stroke-width="0.6"/></svg>
<div class="t" style="left:49.1px;top:229.50px;font-size:5.940px;line-height:10px;color:#32363a;transform:scaleX(0.9091);transform-origin:0 50%;width:94px;overflow:hidden;">SHOWCASE_FLOW_LAYOUT_PANEL</div>
<svg class="r" style="left:36.7px;top:244.7px;" width="3.4" height="5" viewBox="0 0 3.4 5"><path d="M0.55 0.5L2.7 2.5L0.55 4.5" fill="none" stroke="#3f6d99" stroke-width="1.05"/></svg>
<svg class="r" style="left:44.8px;top:244.0px;" width="6.4" height="6.4" viewBox="0 0 6.4 6.4"><rect x="0.5" y="0.8" width="5.4" height="4.8" fill="#eaf0f6" stroke="#6d8fb3" stroke-width="0.7"/><path d="M1.5 2.5h1.8M1.5 4h3.4" stroke="#6d8fb3" stroke-width="0.7"/></svg>
<div class="t" style="left:53.9px;top:242.20px;font-size:5.995px;line-height:10px;color:#32363a;transform:scaleX(0.9091);transform-origin:0 50%;">PA_HEADER_04</div>
<div class="r" style="left:19px;top:253.6px;width:121.5px;height:12px;background:#e8eef5;"></div>
<svg class="r" style="left:35.6px;top:257.8px;" width="5" height="3.4" viewBox="0 0 5 3.4"><path d="M0.5 0.55L2.5 2.7L4.5 0.55" fill="none" stroke="#3f6d99" stroke-width="1.05"/></svg>
<svg class="r" style="left:44.8px;top:256.40000000000003px;" width="6.4" height="6.4" viewBox="0 0 6.4 6.4"><rect x="0.5" y="0.8" width="5.4" height="4.8" fill="#eaf0f6" stroke="#6d8fb3" stroke-width="0.7"/><path d="M1.5 2.5h1.8M1.5 4h3.4" stroke="#6d8fb3" stroke-width="0.7"/></svg>
<div class="t" style="left:53.9px;top:254.60px;font-size:5.995px;line-height:10px;color:#32363a;transform:scaleX(0.9091);transform-origin:0 50%;">FLOW_LAYOUT_PANEL_...</div>
<svg class="r" style="left:139.2px;top:263.4px;" width="2" height="8" viewBox="0 0 2 8"><circle cx="1" cy="1" r="0.7" fill="#5f86ad"/><circle cx="1" cy="4" r="0.7" fill="#5f86ad"/><circle cx="1" cy="7" r="0.7" fill="#5f86ad"/></svg>
<svg class="r" style="left:41.800000000000004px;top:269.5px;" width="3.4" height="5" viewBox="0 0 3.4 5"><path d="M0.55 0.5L2.7 2.5L0.55 4.5" fill="none" stroke="#3f6d99" stroke-width="1.05"/></svg>
<svg class="r" style="left:49.599999999999994px;top:268.8px;" width="6.4" height="6.4" viewBox="0 0 6.4 6.4"><rect x="0.5" y="0.8" width="5.4" height="4.8" fill="#eaf0f6" stroke="#6d8fb3" stroke-width="0.7"/><path d="M1.5 2.5h1.8M1.5 4h3.4" stroke="#6d8fb3" stroke-width="0.7"/></svg>
<div class="t" style="left:58.9px;top:267.00px;font-size:5.995px;line-height:10px;color:#32363a;transform:scaleX(0.9091);transform-origin:0 50%;">PA_TILE_A_04</div>
<svg class="r" style="left:41.800000000000004px;top:281.7px;" width="3.4" height="5" viewBox="0 0 3.4 5"><path d="M0.55 0.5L2.7 2.5L0.55 4.5" fill="none" stroke="#3f6d99" stroke-width="1.05"/></svg>
<svg class="r" style="left:49.599999999999994px;top:281.0px;" width="6.4" height="6.4" viewBox="0 0 6.4 6.4"><rect x="0.5" y="0.8" width="5.4" height="4.8" fill="#eaf0f6" stroke="#6d8fb3" stroke-width="0.7"/><path d="M1.5 2.5h1.8M1.5 4h3.4" stroke="#6d8fb3" stroke-width="0.7"/></svg>
<div class="t" style="left:58.9px;top:279.20px;font-size:5.995px;line-height:10px;color:#32363a;transform:scaleX(0.9091);transform-origin:0 50%;">PA_TILE_B_04</div>
<svg class="r" style="left:41.800000000000004px;top:293.8px;" width="3.4" height="5" viewBox="0 0 3.4 5"><path d="M0.55 0.5L2.7 2.5L0.55 4.5" fill="none" stroke="#3f6d99" stroke-width="1.05"/></svg>
<svg class="r" style="left:49.599999999999994px;top:293.1px;" width="6.4" height="6.4" viewBox="0 0 6.4 6.4"><rect x="0.5" y="0.8" width="5.4" height="4.8" fill="#eaf0f6" stroke="#6d8fb3" stroke-width="0.7"/><path d="M1.5 2.5h1.8M1.5 4h3.4" stroke="#6d8fb3" stroke-width="0.7"/></svg>
<div class="t" style="left:58.9px;top:291.30px;font-size:5.995px;line-height:10px;color:#32363a;transform:scaleX(0.9091);transform-origin:0 50%;">PA_TILE_C_04</div>
<svg class="r" style="left:41.800000000000004px;top:306.2px;" width="3.4" height="5" viewBox="0 0 3.4 5"><path d="M0.55 0.5L2.7 2.5L0.55 4.5" fill="none" stroke="#3f6d99" stroke-width="1.05"/></svg>
<svg class="r" style="left:49.599999999999994px;top:305.5px;" width="6.4" height="6.4" viewBox="0 0 6.4 6.4"><rect x="0.5" y="0.8" width="5.4" height="4.8" fill="#eaf0f6" stroke="#6d8fb3" stroke-width="0.7"/><path d="M1.5 2.5h1.8M1.5 4h3.4" stroke="#6d8fb3" stroke-width="0.7"/></svg>
<div class="t" style="left:58.9px;top:303.70px;font-size:5.995px;line-height:10px;color:#32363a;transform:scaleX(0.9091);transform-origin:0 50%;">PA_TILE_D_04</div>
<svg class="r" style="left:41.800000000000004px;top:318.5px;" width="3.4" height="5" viewBox="0 0 3.4 5"><path d="M0.55 0.5L2.7 2.5L0.55 4.5" fill="none" stroke="#3f6d99" stroke-width="1.05"/></svg>
<svg class="r" style="left:49.599999999999994px;top:317.8px;" width="6.4" height="6.4" viewBox="0 0 6.4 6.4"><rect x="0.5" y="0.8" width="5.4" height="4.8" fill="#eaf0f6" stroke="#6d8fb3" stroke-width="0.7"/><path d="M1.5 2.5h1.8M1.5 4h3.4" stroke="#6d8fb3" stroke-width="0.7"/></svg>
<div class="t" style="left:58.9px;top:316.00px;font-size:5.995px;line-height:10px;color:#32363a;transform:scaleX(0.9091);transform-origin:0 50%;">PA_TILE_E_04</div>
<svg class="r" style="left:31.6px;top:330.7px;" width="3.4" height="5" viewBox="0 0 3.4 5"><path d="M0.55 0.5L2.7 2.5L0.55 4.5" fill="none" stroke="#8fa9c2" stroke-width="1.05"/></svg>
<svg class="r" style="left:39.699999999999996px;top:330.0px;" width="6.4" height="6.4" viewBox="0 0 6.4 6.4"><rect x="0.5" y="0.8" width="5.4" height="4" fill="#eaf0f6" stroke="#6d8fb3" stroke-width="0.7"/><path d="M3.2 4.8V6.1M2.2 6.1h2M1.6 2.8h3.2M3.2 1.2V4.4" stroke="#6d8fb3" stroke-width="0.55"/><path d="M3.2 0V0.8" stroke="#6d8fb3" stroke-width="0.6"/></svg>
<div class="t" style="left:49.1px;top:328.20px;font-size:5.940px;line-height:10px;color:#32363a;transform:scaleX(0.9091);transform-origin:0 50%;">SHOWCASE_SECTION<i style="color:#6a6a6a;font-size:1.04em;margin-left:0.7em">Section</i></div>
<svg class="r" style="left:24.900000000000002px;top:346.5px;" width="3.4" height="5" viewBox="0 0 3.4 5"><path d="M0.55 0.5L2.7 2.5L0.55 4.5" fill="none" stroke="#8fa9c2" stroke-width="1.05"/></svg>
<svg class="r" style="left:33.6px;top:346.2px;" width="6" height="6" viewBox="0 0 6 6"><rect x="0.4" y="0.4" width="3.8" height="3.8" fill="none" stroke="#6d8fb3" stroke-width="0.55"/><rect x="2" y="2" width="3.6" height="3.6" fill="#fff" stroke="#6d8fb3" stroke-width="0.55"/></svg>
<div class="t" style="left:42.4px;top:344.00px;font-size:6.237px;line-height:10px;color:#32363a;transform:scaleX(0.9091);transform-origin:0 50%;">Story Popups</div>
<svg class="r" style="left:126.7px;top:346.59999999999997px;" width="4.6" height="4.6" viewBox="0 0 4.6 4.6"><path d="M2.3 0V4.6M0 2.3H4.6" stroke="#3f6d99" stroke-width="0.8"/></svg>
<svg class="r" style="left:21.900000000000002px;top:362.3px;" width="3.4" height="5" viewBox="0 0 3.4 5"><path d="M0.55 0.5L2.7 2.5L0.55 4.5" fill="none" stroke="#8fa9c2" stroke-width="1.05"/></svg>
<div class="t" style="left:29.2px;top:359.80px;font-size:6.380px;line-height:10px;color:#32363a;transform:scaleX(0.9091);transform-origin:0 50%;font-weight:bold;">Scripting</div>
<svg class="r" style="left:126.7px;top:362.5px;" width="4.6" height="4.6" viewBox="0 0 4.6 4.6"><path d="M2.3 0V4.6M0 2.3H4.6" stroke="#3f6d99" stroke-width="0.8"/></svg>
<div class="r" style="left:140.8px;top:62px;width:468px;height:393px;overflow:hidden;"><div class="r" style="left:24px;top:0px;width:421.5px;height:314.6px;background:#fff;box-shadow:0 1.5px 6px 1px rgba(0,0,0,0.26);"></div></div>
<div class="t" style="left:171.3px;top:73.20px;font-size:12.900px;line-height:14px;color:#2b2b2b;">Next<span style="color:#e8312c">Juice</span></div>
<div class="r" style="left:169px;top:90px;width:414px;height:283.6px;border:0.7px solid #92b2d4;overflow:hidden;"></div>
<div class="r" style="left:169.7px;top:90.7px;width:412.6px;height:282.2px;overflow:hidden;">
<div class="r" style="left:3.70px;top:3.50px;width:196px;height:115.4px;background:#f8f9f9;border:0.7px solid #c6c6c6;border-bottom:1.1px solid #999;border-radius:5px;box-shadow:0 0.8px 1.2px rgba(0,0,0,0.22);"></div>
<div class="t" style="left:7.100000000000023px;top:6.60px;font-size:6.200px;line-height:10px;color:#32363a;">Gross Sales</div>
<div class="t" style="left:6.100000000000023px;top:53.30px;font-size:25.500px;line-height:26px;color:#555555;font-weight:bold;">412,083,197.80</div>
<div class="t" style="left:5.900000000000006px;top:78.90px;font-size:5.800px;line-height:10px;color:#9a9a9a;letter-spacing:0.520px;">Gross Sales</div>
<div class="r" style="left:206.70px;top:3.70px;width:195.4px;height:115.2px;background:#f8f9f9;border:0.7px solid #c6c6c6;border-bottom:1.1px solid #999;border-radius:5px;box-shadow:0 0.8px 1.2px rgba(0,0,0,0.22);"></div>
<div class="t" style="left:210.2px;top:6.50px;font-size:6.330px;line-height:10px;color:#32363a;">Quantity Sold per NJ_STORE.State-TEXT</div>
<div class="r" style="left:3.80px;top:126.60px;width:196px;height:115.8px;background:#f8f9f9;border:0.7px solid #c6c6c6;border-bottom:1.1px solid #999;border-radius:5px;box-shadow:0 0.8px 1.2px rgba(0,0,0,0.22);"></div>
<div class="t" style="left:7.200000000000017px;top:130.60px;font-size:6.400px;line-height:10px;color:#32363a;">Gross Sales per NJ_STORE.Sales Manager-DISPLAY_KEY,</div>
<div class="t" style="left:7.200000000000017px;top:138.00px;font-size:6.400px;line-height:10px;color:#32363a;">Product.Product Category-TEXT</div>
<div class="r" style="left:206.60px;top:126.60px;width:195.3px;height:115.7px;background:#f8f9f9;border:0.7px solid #c6c6c6;border-bottom:1.1px solid #999;border-radius:5px;box-shadow:0 0.8px 1.2px rgba(0,0,0,0.22);"></div>
<div class="t" style="left:210.0px;top:131.00px;font-size:6.300px;line-height:10px;color:#32363a;">Net Revenue per NJ_STORE.State-TEXT</div>
<div class="r" style="left:3.20px;top:250.10px;width:196.5px;height:60px;background:#f8f9f9;border:0.7px solid #c6c6c6;border-bottom:1.1px solid #999;border-radius:5px;box-shadow:0 0.8px 1.2px rgba(0,0,0,0.22);"></div>
<div class="t" style="left:7.100000000000023px;top:253.10px;font-size:6.380px;line-height:10px;color:#32363a;">Net Revenue, Quantity Sold per NJ_STORE.Location-TEXT</div>
<svg class="r" style="left:-169.7px;top:-90.7px" width="800" height="473" viewBox="0 0 800 473"><path d="M474.40 120.40A37.6 37.6 0 1 1 446.06 182.71L460.08 170.48A19 19 0 1 0 474.40 139.00Z" fill="#6f8db5" stroke="#fff" stroke-width="0.5"/><path d="M446.06 182.71A37.6 37.6 0 0 1 437.04 162.22L455.52 160.13A19 19 0 0 0 460.08 170.48Z" fill="#b0c6dd" stroke="#fff" stroke-width="0.5"/><path d="M437.04 162.22A37.6 37.6 0 0 1 474.40 120.40L474.40 139.00A19 19 0 0 0 455.52 160.13Z" fill="#f2e1bb" stroke="#fff" stroke-width="0.5"/><path d="M438.5 126.9L445.9 132.2" stroke="#e9d9b5" stroke-width="0.5"/><path d="M430 176.6L439.6 173" stroke="#c5d5e5" stroke-width="0.5"/><path d="M509.3 173.4L518.2 177.2" stroke="#8fa7c5" stroke-width="0.5"/></svg>
<div class="t" style="left:249.7px;top:30.90px;font-size:4.900px;line-height:10px;color:#333333;font-weight:bold;">26.79%</div>
<div class="t" style="left:244.5px;top:80.40px;font-size:4.900px;line-height:10px;color:#333333;font-weight:bold;">9.62%</div>
<div class="t" style="left:350.59999999999997px;top:80.60px;font-size:4.900px;line-height:10px;color:#333333;font-weight:bold;">63.59%</div>
<svg class="r" style="left:-169.7px;top:-90.7px" width="800" height="473" viewBox="0 0 800 473"><circle cx="284.4" cy="281.4" r="2" fill="#f1dfb8"/><circle cx="282.5" cy="292.1" r="2" fill="#8a8a8c"/><circle cx="279.7" cy="321.2" r="2.2" fill="#f1dfb8"/><circle cx="274.1" cy="290" r="2.5" fill="#b1c7dd"/><circle cx="279.5" cy="280.6" r="2.7" fill="#b1c7dd"/><circle cx="286" cy="295.8" r="2.7" fill="#f1dfb8"/><circle cx="283.7" cy="300.6" r="2.8" fill="#b1c7dd"/><circle cx="252.9" cy="285.8" r="3" fill="#f1dfb8"/><circle cx="278.1" cy="285.8" r="3" fill="#f1dfb8"/><circle cx="284.4" cy="286.7" r="3" fill="#f1dfb8"/><circle cx="256.2" cy="303.5" r="3.3" fill="#b1c7dd"/><circle cx="272.9" cy="281.4" r="3.7" fill="#b1c7dd"/><circle cx="278.4" cy="296.9" r="3.7" fill="#f1dfb8"/><circle cx="289.2" cy="272.5" r="3.8" fill="#b1c7dd"/><circle cx="284.1" cy="316.4" r="3.8" fill="#b1c7dd"/><circle cx="264" cy="303.5" r="3.9" fill="#b1c7dd"/><circle cx="265.9" cy="277.8" r="4" fill="#8a8a8c"/><circle cx="273.1" cy="319.1" r="4" fill="#f1dfb8"/><circle cx="267.3" cy="287.7" r="4.1" fill="#8a8a8c"/><circle cx="259.9" cy="283.3" r="4.3" fill="#f1dfb8"/><circle cx="269.6" cy="296.6" r="4.7" fill="#b1c7dd"/><circle cx="257.4" cy="273.4" r="5.5" fill="#8a8a8c"/><circle cx="294.7" cy="297.4" r="5.8" fill="#b1c7dd"/><circle cx="289" cy="308" r="5.8" fill="#8a8a8c"/><circle cx="250.9" cy="312" r="5.9" fill="#b1c7dd"/><circle cx="258.8" cy="294.4" r="6.2" fill="#8a8a8c"/><circle cx="263.3" cy="314.3" r="6.4" fill="#8a8a8c"/><circle cx="275.7" cy="307.4" r="7" fill="#8a8a8c"/><circle cx="245.9" cy="299.5" r="7.2" fill="#8a8a8c"/><circle cx="295.1" cy="283.3" r="8" fill="#8a8a8c"/><circle cx="276.1" cy="268.5" r="9.6" fill="#8a8a8c"/></svg>
<div class="r" style="left:246.3px;top:148.3px;width:0.9px;height:84px;background:#111111;"></div>
<div class="r" style="left:247.2px;top:153.3px;width:107px;height:18.7px;background:#6f8db5;"></div>
<div class="r" style="left:247.2px;top:181.3px;width:15.1px;height:17.9px;background:#b0c6dd;"></div>
<div class="r" style="left:247.2px;top:209.2px;width:40px;height:17.9px;background:#f2e1bb;"></div>
<div class="t" style="left:200.2px;top:158.30px;font-size:5.720px;line-height:10px;color:#9a9a9a;transform:scaleX(0.9091);transform-origin:0 50%;width:40px;text-align:right;">California</div>
<div class="t" style="left:200.2px;top:186.30px;font-size:5.720px;line-height:10px;color:#9a9a9a;transform:scaleX(0.9091);transform-origin:0 50%;width:40px;text-align:right;">Nevada</div>
<div class="t" style="left:200.2px;top:214.20px;font-size:5.720px;line-height:10px;color:#9a9a9a;transform:scaleX(0.9091);transform-origin:0 50%;width:40px;text-align:right;">Oregon</div>
<div class="t" style="left:355.7px;top:158.30px;font-size:4.950px;line-height:10px;color:#333333;font-weight:bold;">197,312,480.78</div>
<div class="t" style="left:264.6px;top:186.40px;font-size:4.920px;line-height:10px;color:#333333;font-weight:bold;">29,256,698.58</div>
<div class="t" style="left:288.3px;top:214.30px;font-size:4.920px;line-height:10px;color:#333333;font-weight:bold;">74,053,811.42</div>
<div class="r" style="left:11.0px;top:271.90000000000003px;width:44.7px;height:12px;background:#7593bb;"></div>
<div class="r" style="left:57.0px;top:271.90000000000003px;width:46.7px;height:12px;background:#7593bb;"></div>
<div class="r" style="left:105.0px;top:271.90000000000003px;width:46.5px;height:12px;background:#7593bb;"></div>
<div class="r" style="left:152.8px;top:271.90000000000003px;width:39.4px;height:12px;background:#c8c8c2;"></div>
<div class="t" style="left:13.800000000000011px;top:274.10px;font-size:4.600px;line-height:10px;color:#222;">Los Angeles</div>
<div class="t" style="left:59.900000000000006px;top:274.10px;font-size:4.600px;line-height:10px;color:#222;">Santa Barbara</div>
<div class="t" style="left:107.90000000000003px;top:274.10px;font-size:4.600px;line-height:10px;color:#222;">San Jose</div>
<div class="t" style="left:155.90000000000003px;top:274.10px;font-size:4.600px;line-height:10px;color:#222;">Salem</div>
</div>
<div class="r" style="left:560.5px;top:91.4px;width:15.8px;height:15.8px;border-radius:50%;background:#fafafa;box-shadow:0 0.5px 2px rgba(0,0,0,0.35);"></div>
<svg class="r" style="left:564px;top:98px;" width="9" height="3" viewBox="0 0 9 3"><circle cx="1.5" cy="1.5" r="0.85" fill="#3f6d99"/><circle cx="4.5" cy="1.5" r="0.85" fill="#3f6d99"/><circle cx="7.5" cy="1.5" r="0.85" fill="#3f6d99"/></svg>
<div class="r" style="left:578px;top:92px;width:2.8px;height:212px;background:#a6a6a6;border-radius:1.4px;"></div>
<div class="r" style="left:168.6px;top:89.6px;width:2.2px;height:1.2px;background:#3f6d99;"></div>
<div class="r" style="left:168.6px;top:89.6px;width:1.2px;height:2.2px;background:#3f6d99;"></div>
<div class="r" style="left:581.4px;top:89.6px;width:2.2px;height:1.2px;background:#3f6d99;"></div>
<div class="r" style="left:582.4px;top:89.6px;width:1.2px;height:2.2px;background:#3f6d99;"></div>
<div class="r" style="left:168.6px;top:372.6px;width:2.2px;height:1.2px;background:#3f6d99;"></div>
<div class="r" style="left:168.6px;top:371.6px;width:1.2px;height:2.2px;background:#3f6d99;"></div>
<div class="r" style="left:581.4px;top:372.6px;width:2.2px;height:1.2px;background:#3f6d99;"></div>
<div class="r" style="left:582.4px;top:371.6px;width:1.2px;height:2.2px;background:#3f6d99;"></div>
<div class="r" style="left:373.7px;top:89.5px;width:4.3px;height:1.8px;background:#3f6d99;"></div>
<div class="r" style="left:373.7px;top:372.6px;width:4.3px;height:1.6px;background:#3f6d99;"></div>
<div class="r" style="left:168.4px;top:228px;width:1.6px;height:4px;background:#3f6d99;"></div>
<div class="r" style="left:582px;top:228px;width:1.6px;height:4px;background:#3f6d99;"></div>
<div class="t" style="left:310.9px;top:458.60px;font-size:5.940px;line-height:10px;color:#555;transform:scaleX(0.9091);transform-origin:0 50%;">Device:</div>
<div class="r" style="left:334.1px;top:458.4px;width:52.2px;height:10px;background:#fff;border:0.6px solid #c9d0d8;border-radius:1px;"></div>
<div class="t" style="left:337.3px;top:458.50px;font-size:6.270px;line-height:10px;color:#2f6192;transform:scaleX(0.9091);transform-origin:0 50%;">Small Tablet</div>
<svg class="r" style="left:378.8px;top:462.1px;" width="4.4" height="2.8" viewBox="0 0 4.4 2.8"><path d="M0.3 0.3L2.2 2.3L4.1 0.3" fill="none" stroke="#5a83ab" stroke-width="0.7"/></svg>
<div class="t" style="left:390.5px;top:458.60px;font-size:6.358px;line-height:10px;color:#444;transform:scaleX(0.9091);transform-origin:0 50%;">1024 &#215; 768px</div>
<svg class="r" style="left:429.2px;top:460.3px;" width="6.6" height="6.6" viewBox="0 0 6.6 6.6"><circle cx="3.3" cy="3.3" r="2.85" fill="none" stroke="#444" stroke-width="0.65"/><path d="M3.3 2.8V5" stroke="#444" stroke-width="0.8"/><circle cx="3.3" cy="1.75" r="0.45" fill="#444"/></svg>
<div class="r" style="left:610px;top:62px;width:190px;height:16.5px;background:#427cac;"></div>
<div class="r" style="left:776.2px;top:62px;width:23.8px;height:16.5px;background:#2f5f88;"></div>
<svg class="r" style="left:618.6px;top:66.8px;" width="7.6" height="7.6" viewBox="0 0 7.6 7.6"><path d="M1 1L6.6 6.6M6.6 1L1 6.6" stroke="#d5e2ee" stroke-width="0.8"/><circle cx="1.6" cy="1.6" r="1" fill="none" stroke="#d5e2ee" stroke-width="0.6"/><circle cx="6" cy="6" r="1" fill="none" stroke="#d5e2ee" stroke-width="0.6"/><circle cx="6" cy="1.6" r="1" fill="none" stroke="#d5e2ee" stroke-width="0.6"/><circle cx="1.6" cy="6" r="1" fill="none" stroke="#d5e2ee" stroke-width="0.6"/></svg>
<div class="t" style="left:634.7px;top:65.40px;font-size:5.687px;line-height:10px;color:#ffffff;transform:scaleX(0.9091);transform-origin:0 50%;font-weight:bold;">Builder</div>
<svg class="r" style="left:784.8px;top:67px;" width="7.4" height="7.4" viewBox="0 0 7.4 7.4"><path d="M1.2 6.2L2.6 3.6L4.6 1L6.6 3L4 5L1.2 6.2Z" fill="none" stroke="#dfe8f0" stroke-width="0.7"/><path d="M2.6 3.6L4 5" stroke="#dfe8f0" stroke-width="0.6"/></svg>
<svg class="r" style="left:621.4px;top:93.6px;" width="5.6" height="3.8" viewBox="0 0 5.6 3.8"><path d="M0.5 0.5L2.8 3L5.1 0.5" fill="none" stroke="#3f6d99" stroke-width="1"/></svg>
<div class="t" style="left:630.1px;top:90.50px;font-size:7.997px;line-height:10px;color:#32363a;transform:scaleX(0.9091);transform-origin:0 50%;">Responsive Rule Configuration</div>
<div class="t" style="left:630.1px;top:108.70px;font-size:6.380px;line-height:10px;color:#555;transform:scaleX(0.9091);transform-origin:0 50%;">Enable the rule in Design Time</div>
<div class="r" style="left:711.6px;top:108.2px;width:23.2px;height:10.5px;background:#2d5f8c;border-radius:5.25px;"></div>
<div class="r" style="left:726.2px;top:110px;width:7px;height:7px;border-radius:50%;border:0.9px solid #fff;background:#2d5f8c;"></div>
<div class="r" style="left:630.3px;top:128.2px;width:155px;height:136.6px;background:#fafafa;border:0.7px solid #dcdcdc;border-radius:4.5px;"></div>
<div class="t" style="left:639.9px;top:129.60px;font-size:6.413px;line-height:10px;color:#3b6a97;transform:scaleX(0.9091);transform-origin:0 50%;">Break Point 1</div>
<svg class="r" style="left:731.4px;top:131.2px;" width="6.2" height="6.8" viewBox="0 0 6.2 6.8"><path d="M2 2V0.5H5.7V4.8H4.3" fill="none" stroke="#4a77a3" stroke-width="0.65"/><path d="M0.5 2H4.3V6.3H0.5Z" fill="none" stroke="#4a77a3" stroke-width="0.7"/></svg>
<svg class="r" style="left:752px;top:132.8px;" width="5.2" height="3.4" viewBox="0 0 5.2 3.4"><path d="M0.45 2.9L2.6 0.7L4.75 2.9" fill="none" stroke="#2f6192" stroke-width="1"/></svg>
<svg class="r" style="left:772px;top:132.1px;" width="5" height="5" viewBox="0 0 5 5"><path d="M0.5 0.5L4.5 4.5M4.5 0.5L0.5 4.5" stroke="#2f6192" stroke-width="0.95"/></svg>
<div class="t" style="left:640.3px;top:142.70px;font-size:6.446px;line-height:10px;color:#555;transform:scaleX(0.9091);transform-origin:0 50%;">When the screen width is &lt;=</div>
<div class="r" style="left:640.3px;top:155.8px;width:115.4px;height:10.2px;background:#fff;border:0.6px solid #c9c9c9;border-radius:1px;"></div>
<div class="t" style="left:644.1px;top:156.20px;font-size:6.160px;line-height:10px;color:#222;transform:scaleX(0.9091);transform-origin:0 50%;">550</div>
<div class="t" style="left:757.8px;top:155.60px;font-size:6.490px;line-height:10px;color:#666;transform:scaleX(0.9091);transform-origin:0 50%;">px</div>
<div class="t" style="left:640.3px;top:168.40px;font-size:6.446px;line-height:10px;color:#555;transform:scaleX(0.9091);transform-origin:0 50%;">Set the widget width</div>
<svg class="r" style="left:695.8px;top:170.2px;" width="6.4" height="6.4" viewBox="0 0 6.4 6.4"><circle cx="3.2" cy="3.2" r="2.85" fill="none" stroke="#555" stroke-width="0.6"/><path d="M3.2 2.7V4.9" stroke="#555" stroke-width="0.75"/><circle cx="3.2" cy="1.7" r="0.42" fill="#555"/></svg>
<div class="r" style="left:640.3px;top:180.7px;width:79.3px;height:10.6px;background:#fff;border:0.6px solid #c9c9c9;border-radius:1px;"></div>
<div class="t" style="left:644.1px;top:181.00px;font-size:5.852px;line-height:10px;color:#222;transform:scaleX(0.9091);transform-origin:0 50%;font-weight:bold;">Each Widget</div>
<svg class="r" style="left:709.8px;top:184.6px;" width="4.8" height="3" viewBox="0 0 4.8 3"><path d="M0.35 0.35L2.4 2.5L4.45 0.35" fill="none" stroke="#4f7aa5" stroke-width="0.75"/></svg>
<div class="t" style="left:721.8px;top:181.00px;font-size:6.160px;line-height:10px;color:#888;transform:scaleX(0.9091);transform-origin:0 50%;">=</div>
<div class="r" style="left:727px;top:180.7px;width:28.7px;height:10.6px;background:#fff;border:0.6px solid #c9c9c9;border-radius:1px;"></div>
<div class="t" style="left:730.8px;top:181.00px;font-size:6.160px;line-height:10px;color:#222;transform:scaleX(0.9091);transform-origin:0 50%;">100</div>
<div class="t" style="left:760.8px;top:181.20px;font-size:6.490px;line-height:10px;color:#666;transform:scaleX(0.9091);transform-origin:0 50%;">%</div>
<svg class="r" style="left:650.6px;top:200.2px;" width="5" height="5" viewBox="0 0 5 5"><path d="M2.5 0V5M0 2.5H5" stroke="#3f6d99" stroke-width="0.75"/></svg>
<div class="t" style="left:660px;top:197.70px;font-size:5.324px;line-height:10px;color:#2f6192;transform:scaleX(0.9091);transform-origin:0 50%;">Add Widget</div>
<svg class="r" style="left:650.6px;top:226.2px;" width="5" height="5" viewBox="0 0 5 5"><path d="M2.5 0V5M0 2.5H5" stroke="#3f6d99" stroke-width="0.75"/></svg>
<div class="t" style="left:660px;top:223.70px;font-size:5.324px;line-height:10px;color:#2f6192;transform:scaleX(0.9091);transform-origin:0 50%;">Add Widget</div>
<div class="t" style="left:640.5px;top:209.90px;font-size:6.446px;line-height:10px;color:#555;transform:scaleX(0.9091);transform-origin:0 50%;">Set the widget height</div>
<svg class="r" style="left:697.7px;top:211.7px;" width="6.4" height="6.4" viewBox="0 0 6.4 6.4"><circle cx="3.2" cy="3.2" r="2.85" fill="none" stroke="#555" stroke-width="0.6"/><path d="M3.2 2.7V4.9" stroke="#555" stroke-width="0.75"/><circle cx="3.2" cy="1.7" r="0.42" fill="#555"/></svg>
<div class="t" style="left:640.5px;top:235.60px;font-size:6.446px;line-height:10px;color:#555;transform:scaleX(0.9091);transform-origin:0 50%;">Hide the widgets</div>
<div class="t" style="left:642.6px;top:248.75px;font-size:5.280px;line-height:10px;color:#2f6192;transform:scaleX(0.9091);transform-origin:0 50%;">Select Widgets</div>
<div class="r" style="left:630.3px;top:271.7px;width:155px;height:136.6px;background:#fafafa;border:0.7px solid #dcdcdc;border-radius:4.5px;"></div>
<div class="t" style="left:639.9px;top:273.10px;font-size:6.413px;line-height:10px;color:#3b6a97;transform:scaleX(0.9091);transform-origin:0 50%;">Break Point 2</div>
<svg class="r" style="left:731.4px;top:274.7px;" width="6.2" height="6.8" viewBox="0 0 6.2 6.8"><path d="M2 2V0.5H5.7V4.8H4.3" fill="none" stroke="#4a77a3" stroke-width="0.65"/><path d="M0.5 2H4.3V6.3H0.5Z" fill="none" stroke="#4a77a3" stroke-width="0.7"/></svg>
<svg class="r" style="left:752px;top:276.3px;" width="5.2" height="3.4" viewBox="0 0 5.2 3.4"><path d="M0.45 2.9L2.6 0.7L4.75 2.9" fill="none" stroke="#2f6192" stroke-width="1"/></svg>
<svg class="r" style="left:772px;top:275.6px;" width="5" height="5" viewBox="0 0 5 5"><path d="M0.5 0.5L4.5 4.5M4.5 0.5L0.5 4.5" stroke="#2f6192" stroke-width="0.95"/></svg>
<div class="t" style="left:640.3px;top:286.20px;font-size:6.446px;line-height:10px;color:#555;transform:scaleX(0.9091);transform-origin:0 50%;">When the screen width is &lt;=</div>
<div class="r" style="left:640.3px;top:299.3px;width:115.4px;height:10.2px;background:#fff;border:0.6px solid #c9c9c9;border-radius:1px;"></div>
<div class="t" style="left:644.1px;top:299.70px;font-size:6.160px;line-height:10px;color:#222;transform:scaleX(0.9091);transform-origin:0 50%;">1100</div>
<div class="t" style="left:757.8px;top:299.10px;font-size:6.490px;line-height:10px;color:#666;transform:scaleX(0.9091);transform-origin:0 50%;">px</div>
<div class="t" style="left:640.3px;top:311.90px;font-size:6.446px;line-height:10px;color:#555;transform:scaleX(0.9091);transform-origin:0 50%;">Set the widget width</div>
<svg class="r" style="left:695.8px;top:313.7px;" width="6.4" height="6.4" viewBox="0 0 6.4 6.4"><circle cx="3.2" cy="3.2" r="2.85" fill="none" stroke="#555" stroke-width="0.6"/><path d="M3.2 2.7V4.9" stroke="#555" stroke-width="0.75"/><circle cx="3.2" cy="1.7" r="0.42" fill="#555"/></svg>
<div class="r" style="left:640.3px;top:324.2px;width:79.3px;height:10.6px;background:#fff;border:0.6px solid #c9c9c9;border-radius:1px;"></div>
<div class="t" style="left:644.1px;top:324.50px;font-size:5.852px;line-height:10px;color:#222;transform:scaleX(0.9091);transform-origin:0 50%;font-weight:bold;">Each Widget</div>
<svg class="r" style="left:709.8px;top:328.1px;" width="4.8" height="3" viewBox="0 0 4.8 3"><path d="M0.35 0.35L2.4 2.5L4.45 0.35" fill="none" stroke="#4f7aa5" stroke-width="0.75"/></svg>
<div class="t" style="left:721.8px;top:324.50px;font-size:6.160px;line-height:10px;color:#888;transform:scaleX(0.9091);transform-origin:0 50%;">=</div>
<div class="r" style="left:727px;top:324.2px;width:28.7px;height:10.6px;background:#fff;border:0.6px solid #c9c9c9;border-radius:1px;"></div>
<div class="t" style="left:730.8px;top:324.50px;font-size:6.160px;line-height:10px;color:#222;transform:scaleX(0.9091);transform-origin:0 50%;">50</div>
<div class="t" style="left:760.8px;top:324.70px;font-size:6.490px;line-height:10px;color:#666;transform:scaleX(0.9091);transform-origin:0 50%;">%</div>
<svg class="r" style="left:650.6px;top:343.7px;" width="5" height="5" viewBox="0 0 5 5"><path d="M2.5 0V5M0 2.5H5" stroke="#3f6d99" stroke-width="0.75"/></svg>
<div class="t" style="left:660px;top:341.20px;font-size:5.324px;line-height:10px;color:#2f6192;transform:scaleX(0.9091);transform-origin:0 50%;">Add Widget</div>
<svg class="r" style="left:650.6px;top:369.7px;" width="5" height="5" viewBox="0 0 5 5"><path d="M2.5 0V5M0 2.5H5" stroke="#3f6d99" stroke-width="0.75"/></svg>
<div class="t" style="left:660px;top:367.20px;font-size:5.324px;line-height:10px;color:#2f6192;transform:scaleX(0.9091);transform-origin:0 50%;">Add Widget</div>
<div class="t" style="left:640.5px;top:353.40px;font-size:6.446px;line-height:10px;color:#555;transform:scaleX(0.9091);transform-origin:0 50%;">Set the widget height</div>
<svg class="r" style="left:697.7px;top:355.2px;" width="6.4" height="6.4" viewBox="0 0 6.4 6.4"><circle cx="3.2" cy="3.2" r="2.85" fill="none" stroke="#555" stroke-width="0.6"/><path d="M3.2 2.7V4.9" stroke="#555" stroke-width="0.75"/><circle cx="3.2" cy="1.7" r="0.42" fill="#555"/></svg>
<div class="t" style="left:640.5px;top:379.10px;font-size:6.446px;line-height:10px;color:#555;transform:scaleX(0.9091);transform-origin:0 50%;">Hide the widgets</div>
<div class="t" style="left:642.6px;top:392.25px;font-size:5.280px;line-height:10px;color:#2f6192;transform:scaleX(0.9091);transform-origin:0 50%;">Select Widgets</div>
<svg class="r" style="left:639.5px;top:412.3px;" width="5" height="5" viewBox="0 0 5 5"><path d="M2.5 0V5M0 2.5H5" stroke="#3f6d99" stroke-width="0.75"/></svg>
<div class="t" style="left:648.5px;top:409.80px;font-size:5.588px;line-height:10px;color:#2f6192;transform:scaleX(0.9091);transform-origin:0 50%;">Add Breakpoint</div>
</div></body></html>
